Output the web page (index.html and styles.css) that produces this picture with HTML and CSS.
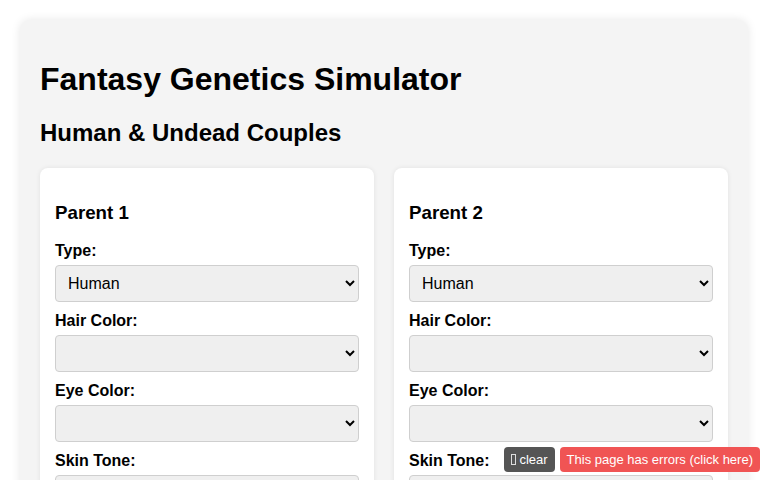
FILE: index.html
```html
<!DOCTYPE html>
<html lang="en">
<head>
<meta charset="utf-8">
<title>Fantasy Genetics Simulator</title>
<link rel="stylesheet" href="styles.css">
</head>
<body>
<div class="container">
  <h1>Fantasy Genetics Simulator</h1>
  <h2>Human &amp; Undead Couples</h2>
  <div class="parents">
    <div class="card">
      <h3>Parent 1</h3>
      <label>Type:</label>
      <select><option>Human</option><option>Undead</option></select>
      <label>Hair Color:</label>
      <select><option></option></select>
      <label>Eye Color:</label>
      <select><option></option></select>
      <label>Skin Tone:</label>
      <select><option></option></select>
    </div>
    <div class="card">
      <h3>Parent 2</h3>
      <label>Type:</label>
      <select><option>Human</option><option>Undead</option></select>
      <label>Hair Color:</label>
      <select><option></option></select>
      <label>Eye Color:</label>
      <select><option></option></select>
      <label>Skin Tone:</label>
      <select><option></option></select>
    </div>
  </div>
</div>
<div class="overlay">
  <button class="btn-clear"><span class="tofu"></span> clear</button>
  <button class="btn-errors">This page has errors (click here)</button>
</div>
</body>
</html>
```

FILE: styles.css
```css
html, body {
  margin: 0;
  background: #ffffff;
}
body {
  font-family: "Liberation Sans", Arial, sans-serif;
  padding: 20px;
  color: #000;
}
.container {
  background: #f4f4f4;
  border-radius: 10px;
  box-shadow: 0 0 10px rgba(0, 0, 0, 0.1);
  padding: 20px;
}
h1 {
  font-size: 32px;
  margin: 21px 0;
}
h2 {
  font-size: 24px;
  margin: 20px 0 21px;
}
.parents {
  display: grid;
  grid-template-columns: 1fr 1fr;
  gap: 20px;
}
.card {
  background: #fff;
  border-radius: 8px;
  box-shadow: 0 0 5px rgba(0, 0, 0, 0.08);
  padding: 15px;
}
h3 {
  font-size: 18.72px;
  margin: 19px 0 18px;
}
label {
  display: block;
  font-weight: bold;
  font-size: 16px;
  margin-bottom: 5px;
}
select {
  display: block;
  width: 100%;
  box-sizing: border-box;
  padding: 8px;
  margin-bottom: 10px;
  font-family: "Liberation Sans", Arial, sans-serif;
  font-size: 16px;
  color: #000;
  background: #efefef;
  border: 1px solid #cfcfcf;
  border-radius: 4px;
  height: 37px;
}
.overlay {
  position: fixed;
  right: 8px;
  bottom: 8px;
  display: flex;
  gap: 5px;
}
.overlay button {
  border: none;
  border-radius: 4px;
  color: #fff;
  font-family: "Liberation Sans", Arial, sans-serif;
  font-size: 13px;
  height: 25px;
  padding: 0 7px;
}
.btn-clear {
  background: #555555;
}
.btn-errors {
  background: #f05454;
}
.tofu {
  display: inline-block;
  width: 3px;
  height: 9px;
  border: 1px solid #ddd;
  vertical-align: -1px;
}
```
